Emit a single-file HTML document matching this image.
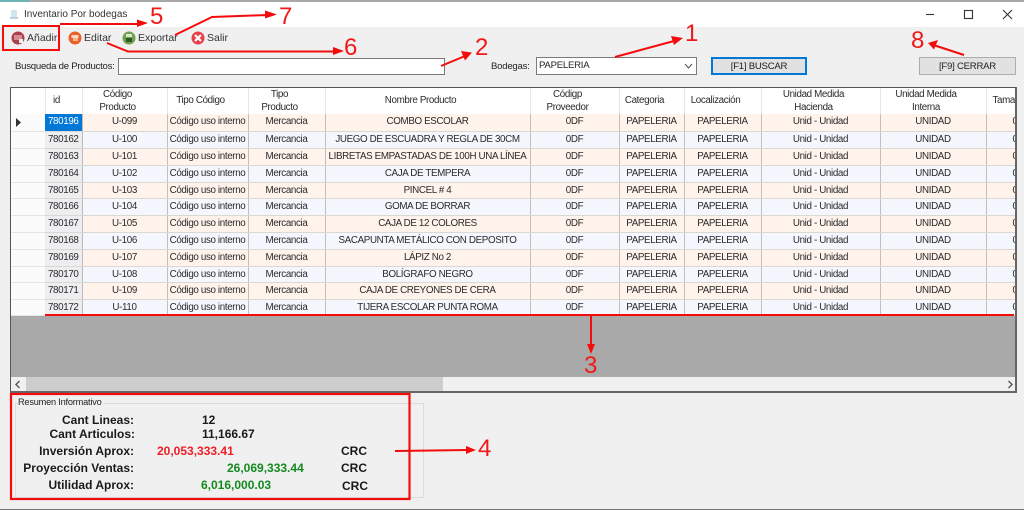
<!DOCTYPE html>
<html><head><meta charset="utf-8"><style>
html,body{margin:0;padding:0;background:#f0f0f0}
body{width:1024px;height:510px;position:relative;overflow:hidden;font-family:"Liberation Sans",sans-serif;color:#222;filter:blur(.3px)}
.a{position:absolute;white-space:nowrap}
.t{font-size:9.6px;letter-spacing:-.25px;line-height:14px}
.tb{font-size:10.5px;letter-spacing:0;line-height:14px;color:#333}
#grid{position:absolute;left:10px;top:87px;width:1004px;height:303px;border:1px solid #555;border-right:2px solid #666;border-bottom:2px solid #666;background:#a9a9a9;overflow:hidden}
table{border-collapse:collapse;table-layout:fixed;width:1005px;position:absolute;left:0;top:0}
td,th{padding:0;overflow:hidden;white-space:nowrap;text-align:center;font-weight:normal;font-size:9.8px;letter-spacing:-.36px;color:#2a2a2a;line-height:12px}
td{padding-top:2px;box-sizing:border-box;vertical-align:top}
th{height:26px;background:#fff;border-right:1px solid #e6e6e6;padding:1px 14px 0 0;box-sizing:border-box;line-height:12.5px}
th:first-child,th:last-child{padding-right:0}
th:last-child{text-align:left;padding-left:6px}
td{border-right:1px solid #c4beb9;border-bottom:1px solid #dcd7d3}
tr.o td{background:#fff3ec}tr.e td{background:#f5f7ff}
tr td.h{background:#fbfbfb;border-right:0;border-bottom:1px solid #e6e6e6}
tr td.i{background:#eeeef1;border-right:1px solid #bbb}
tr td.s{background:#0078d7;color:#fff}
td:last-child{text-align:left;padding-left:26px;border-right:0}
.sum{font-weight:bold;font-size:12px;line-height:14px;color:#1a1a1a}
</style></head><body>
<div class="a" style="left:0;top:0;width:1024px;height:2px;background:#a8a8a8"></div>
<div class="a" style="left:0;top:0;width:30px;height:2px;background:#6fb3b8"></div>
<div class="a" style="left:0;top:2px;width:1024px;height:25px;background:#fff"></div>
<svg class="a" style="left:9px;top:9px" width="10" height="12"><rect x="2" y="1" width="6" height="7" fill="#cfe6ee"/><rect x="1" y="8" width="8" height="2" fill="#b7d3dc"/></svg>
<div class="a" style="left:24px;top:8px;font-size:10px;line-height:14px;color:#333">Inventario Por bodegas</div>
<svg class="a" style="left:920px;top:6px" width="100" height="16" fill="none" stroke="#333" stroke-width="1.1"><path d="M6 8.500H14"/><rect x="44.500" y="4.500" width="8" height="8"/><path d="M83 4L92 13M92 4L83 13"/></svg>

<svg class="a" style="left:10px;top:30px" width="16" height="16"><circle cx="8" cy="8" r="6.500" fill="#a9404c"/><rect x="4" y="5" width="8" height="5" fill="#d98a92"/><rect x="9" y="9" width="4" height="4" fill="#eee"/></svg>
<div class="a tb" style="left:27px;top:31px">Añadir</div>
<svg class="a" style="left:67px;top:30px" width="16" height="16"><circle cx="8" cy="8" r="6.500" fill="#e8622a"/><rect x="4.500" y="5" width="7" height="3" fill="#fbd9c6"/><rect x="6" y="8" width="5" height="3" fill="#f9b491"/></svg>
<div class="a tb" style="left:84px;top:31px">Editar</div>
<svg class="a" style="left:121px;top:30px" width="16" height="16"><circle cx="8" cy="8" r="6.500" fill="#6fa04c"/><rect x="5" y="4" width="6" height="3" fill="#d9e8cc"/><rect x="5" y="8" width="6" height="4" fill="#2f5a2a"/></svg>
<div class="a tb" style="left:138px;top:31px">Exportar</div>
<svg class="a" style="left:190px;top:30px" width="16" height="16"><circle cx="8" cy="8" r="6.500" fill="#e8404a"/><path d="M5 5L11 11M11 5L5 11" stroke="#fff" stroke-width="2.200"/></svg>
<div class="a tb" style="left:207px;top:31px">Salir</div>

<div class="a t" style="left:15px;top:60px">Busqueda de Productos:</div>
<div class="a" style="left:118px;top:58px;width:325px;height:15px;background:#fff;border:1px solid #7a7a7a"></div>
<div class="a t" style="left:491px;top:60px">Bodegas:</div>
<div class="a" style="left:536px;top:57px;width:159px;height:16px;background:#fff;border:1px solid #7a7a7a"></div>
<div class="a t" style="left:539px;top:59px">PAPELERIA</div>
<svg class="a" style="left:684px;top:62px" width="10" height="8" fill="none" stroke="#555"><path d="M1 2L4.500 6L8 2"/></svg>
<div class="a t" style="left:711px;top:57px;width:92px;height:14px;background:#e1e1e1;border:2px solid #0078d7;text-align:center;line-height:16px">[F1] BUSCAR</div>
<div class="a t" style="left:919px;top:57px;width:95px;height:16px;background:#e1e1e1;border:1px solid #adadad;text-align:center;line-height:18px">[F9] CERRAR</div>

<div id="grid">
<table>
<colgroup><col style="width:34px"><col style="width:37px"><col style="width:85px"><col style="width:81px"><col style="width:77px"><col style="width:205px"><col style="width:89px"><col style="width:65px"><col style="width:77px"><col style="width:119px"><col style="width:106px"><col style="width:30px"></colgroup>
<tr><th></th><th>id</th><th>Código<br>Producto</th><th>Tipo Código</th><th>Tipo<br>Producto</th><th>Nombre Producto</th><th>Códigp<br>Proveedor</th><th>Categoria</th><th>Localización</th><th>Unidad Medida<br>Hacienda</th><th>Unidad Medida<br>Interna</th><th>Tamaño</th></tr>
<tr class="o" style="height:17px"><td class="h" style="text-align:left;padding-left:5px;padding-top:4px"><svg width="6" height="9" style="display:block"><path d="M0 0L5 4.500L0 9Z" fill="#333"/></svg></td><td class="i s">780196</td><td>U-099</td><td>Código uso interno</td><td>Mercancia</td><td>COMBO ESCOLAR</td><td>0DF</td><td>PAPELERIA</td><td>PAPELERIA</td><td>Unid - Unidad</td><td>UNIDAD</td><td>0</td></tr>
<tr class="e" style="height:17px"><td class="h"></td><td class="i">780162</td><td>U-100</td><td>Código uso interno</td><td>Mercancia</td><td>JUEGO DE ESCUADRA Y REGLA DE 30CM</td><td>0DF</td><td>PAPELERIA</td><td>PAPELERIA</td><td>Unid - Unidad</td><td>UNIDAD</td><td>0</td></tr>
<tr class="o" style="height:17px"><td class="h"></td><td class="i">780163</td><td>U-101</td><td>Código uso interno</td><td>Mercancia</td><td>LIBRETAS EMPASTADAS DE 100H UNA LÍNEA</td><td>0DF</td><td>PAPELERIA</td><td>PAPELERIA</td><td>Unid - Unidad</td><td>UNIDAD</td><td>0</td></tr>
<tr class="e" style="height:17px"><td class="h"></td><td class="i">780164</td><td>U-102</td><td>Código uso interno</td><td>Mercancia</td><td>CAJA DE TEMPERA</td><td>0DF</td><td>PAPELERIA</td><td>PAPELERIA</td><td>Unid - Unidad</td><td>UNIDAD</td><td>0</td></tr>
<tr class="o" style="height:16px"><td class="h"></td><td class="i">780165</td><td>U-103</td><td>Código uso interno</td><td>Mercancia</td><td>PINCEL # 4</td><td>0DF</td><td>PAPELERIA</td><td>PAPELERIA</td><td>Unid - Unidad</td><td>UNIDAD</td><td>0</td></tr>
<tr class="e" style="height:17px"><td class="h"></td><td class="i">780166</td><td>U-104</td><td>Código uso interno</td><td>Mercancia</td><td>GOMA DE BORRAR</td><td>0DF</td><td>PAPELERIA</td><td>PAPELERIA</td><td>Unid - Unidad</td><td>UNIDAD</td><td>0</td></tr>
<tr class="o" style="height:17px"><td class="h"></td><td class="i">780167</td><td>U-105</td><td>Código uso interno</td><td>Mercancia</td><td>CAJA DE 12 COLORES</td><td>0DF</td><td>PAPELERIA</td><td>PAPELERIA</td><td>Unid - Unidad</td><td>UNIDAD</td><td>0</td></tr>
<tr class="e" style="height:17px"><td class="h"></td><td class="i">780168</td><td>U-106</td><td>Código uso interno</td><td>Mercancia</td><td>SACAPUNTA METÁLICO CON DEPOSITO</td><td>0DF</td><td>PAPELERIA</td><td>PAPELERIA</td><td>Unid - Unidad</td><td>UNIDAD</td><td>0</td></tr>
<tr class="o" style="height:17px"><td class="h"></td><td class="i">780169</td><td>U-107</td><td>Código uso interno</td><td>Mercancia</td><td>LÁPIZ No 2</td><td>0DF</td><td>PAPELERIA</td><td>PAPELERIA</td><td>Unid - Unidad</td><td>UNIDAD</td><td>0</td></tr>
<tr class="e" style="height:16px"><td class="h"></td><td class="i">780170</td><td>U-108</td><td>Código uso interno</td><td>Mercancia</td><td>BOLÍGRAFO NEGRO</td><td>0DF</td><td>PAPELERIA</td><td>PAPELERIA</td><td>Unid - Unidad</td><td>UNIDAD</td><td>0</td></tr>
<tr class="o" style="height:17px"><td class="h"></td><td class="i">780171</td><td>U-109</td><td>Código uso interno</td><td>Mercancia</td><td>CAJA DE CREYONES DE CERA</td><td>0DF</td><td>PAPELERIA</td><td>PAPELERIA</td><td>Unid - Unidad</td><td>UNIDAD</td><td>0</td></tr>
<tr class="e" style="height:16px"><td class="h"></td><td class="i">780172</td><td>U-110</td><td>Código uso interno</td><td>Mercancia</td><td>TIJERA ESCOLAR PUNTA ROMA</td><td>0DF</td><td>PAPELERIA</td><td>PAPELERIA</td><td>Unid - Unidad</td><td>UNIDAD</td><td>0</td></tr>
</table>
<div class="a" style="left:0;top:289px;width:1004px;height:14px;background:#f0f0f0"></div>
<div class="a" style="left:15px;top:289px;width:417px;height:14px;background:#cdcdcd"></div>
<svg class="a" style="left:3px;top:292px" width="8" height="9" fill="none" stroke="#555" stroke-width="1.400"><path d="M5.500 1L2 4.500L5.500 8"/></svg>
<svg class="a" style="left:995px;top:292px" width="8" height="9" fill="none" stroke="#555" stroke-width="1.400"><path d="M2.500 1L6 4.500L2.500 8"/></svg>
</div>

<div class="a" style="left:15px;top:403px;width:407px;height:93px;border:1px solid #dcdcdc"></div>
<div class="a" style="left:18px;top:396px;font-size:9.200px;letter-spacing:-.2px;line-height:13px;background:#f0f0f0;padding-right:2px">Resumen Informativo</div>
<div class="a sum" style="right:890px;top:413px">Cant Lineas:</div>
<div class="a sum" style="right:889px;top:427px">Cant Articulos:</div>
<div class="a sum" style="right:890px;top:444px">Inversión Aprox:</div>
<div class="a sum" style="right:890px;top:461px">Proyección Ventas:</div>
<div class="a sum" style="right:890px;top:478px">Utilidad Aprox:</div>
<div class="a sum" style="left:202px;top:413px">12</div>
<div class="a sum" style="left:202px;top:427px">11,166.67</div>
<div class="a sum" style="left:157px;top:444px;color:#f01c24">20,053,333.41</div>
<div class="a sum" style="left:227px;top:461px;color:#138a1e">26,069,333.44</div>
<div class="a sum" style="left:201px;top:478px;color:#138a1e">6,016,000.03</div>
<div class="a sum" style="left:341px;top:444px">CRC</div>
<div class="a sum" style="left:341px;top:461px">CRC</div>
<div class="a sum" style="left:342px;top:479px">CRC</div>
<div class="a" style="left:0;top:509px;width:1024px;height:1px;background:#777"></div>

<svg class="a" style="left:0;top:0" width="1024" height="510" fill="none" stroke="#f40c0c" stroke-width="2">
<rect x="3" y="26" width="56" height="24" stroke-width="2"/>
<rect x="11" y="394" width="398.500" height="105" stroke-width="2.200"/>
<path d="M45 315H1014"/>
<path d="M60 24H140"/><path d="M137 19.500L148 23L137 27Z" fill="#f40c0c" stroke="none"/>
<path d="M175 35L212 17L268 15"/><path d="M265 10.500L277 14.500L265 18.500Z" fill="#f40c0c" stroke="none"/>
<path d="M107 43L128 51.500H335"/><path d="M333 47L344 51L333 55Z" fill="#f40c0c" stroke="none"/>
<path d="M441 66L465 56"/><path d="M461 51L472 52.500L465 60.500Z" fill="#f40c0c" stroke="none"/>
<path d="M615 57L674 41"/><path d="M671 36L683 38L674 45Z" fill="#f40c0c" stroke="none"/>
<path d="M964 55L935 45.500"/><path d="M938 40L928 43L934 49.500Z" fill="#f40c0c" stroke="none"/>
<path d="M591 316V346"/><path d="M587 344L591 354L595 344Z" fill="#f40c0c" stroke="none"/>
<path d="M395 451L468 450"/><path d="M466 446L476 450L466 454Z" fill="#f40c0c" stroke="none"/>
</svg>
<div class="a" style="left:150px;top:3px;font-size:24px;line-height:27px;color:#f01818">5</div>
<div class="a" style="left:279px;top:3px;font-size:24px;line-height:27px;color:#f01818">7</div>
<div class="a" style="left:344px;top:34px;font-size:24px;line-height:27px;color:#f01818">6</div>
<div class="a" style="left:475px;top:34px;font-size:24px;line-height:27px;color:#f01818">2</div>
<div class="a" style="left:685px;top:20px;font-size:24px;line-height:27px;color:#f01818">1</div>
<div class="a" style="left:911px;top:27px;font-size:24px;line-height:27px;color:#f01818">8</div>
<div class="a" style="left:584px;top:352px;font-size:24px;line-height:27px;color:#f01818">3</div>
<div class="a" style="left:478px;top:435px;font-size:24px;line-height:27px;color:#f01818">4</div>
</body></html>
